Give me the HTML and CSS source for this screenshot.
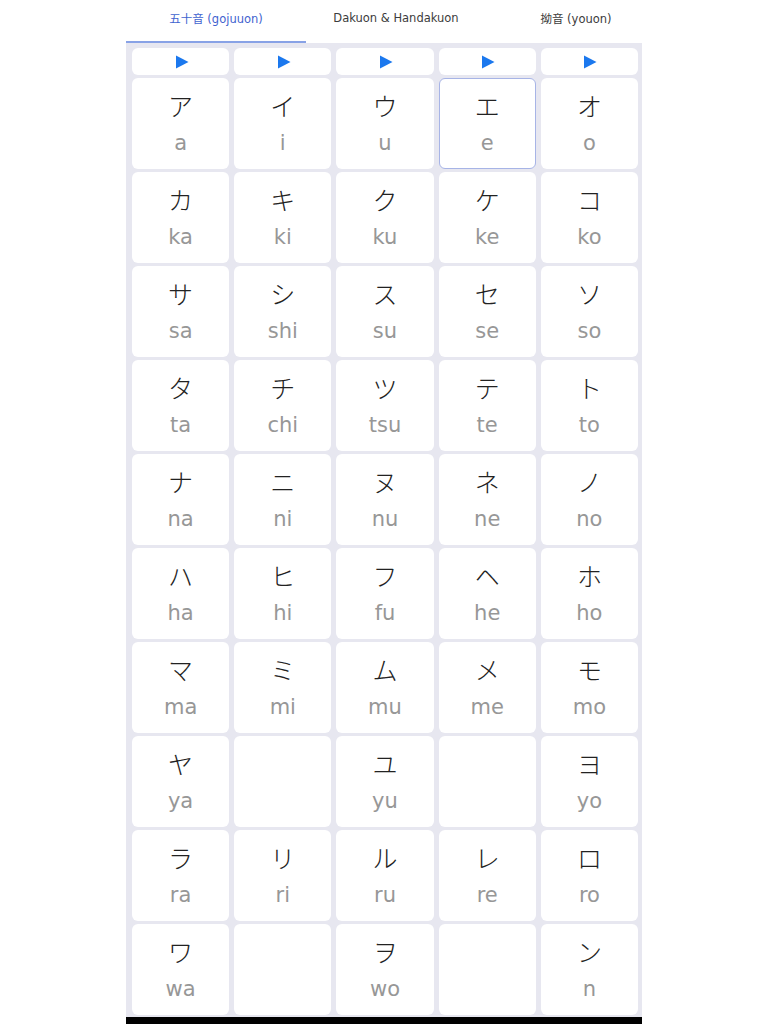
FILE: index.html
```html
<!DOCTYPE html>
<html lang="ja">
<head>
<meta charset="utf-8">
<title>Katakana</title>
<link rel="stylesheet" href="styles.css">
</head>
<body>
<div class="app">
  <nav class="tabs">
    <div class="tab active">五十音 (gojuuon)</div>
    <div class="tab">Dakuon &amp; Handakuon</div>
    <div class="tab">拗音 (youon)</div>
  </nav>
  <main class="grid">
    <button class="play"><svg viewBox="0 0 14 14" width="14" height="14"><path d="M1 0.5 L13.5 7 L1 13.5 Z"/></svg></button>
    <button class="play"><svg viewBox="0 0 14 14" width="14" height="14"><path d="M1 0.5 L13.5 7 L1 13.5 Z"/></svg></button>
    <button class="play"><svg viewBox="0 0 14 14" width="14" height="14"><path d="M1 0.5 L13.5 7 L1 13.5 Z"/></svg></button>
    <button class="play"><svg viewBox="0 0 14 14" width="14" height="14"><path d="M1 0.5 L13.5 7 L1 13.5 Z"/></svg></button>
    <button class="play"><svg viewBox="0 0 14 14" width="14" height="14"><path d="M1 0.5 L13.5 7 L1 13.5 Z"/></svg></button>

    <div class="cell"><span class="kana">ア</span><span class="romaji">a</span></div>
    <div class="cell"><span class="kana">イ</span><span class="romaji">i</span></div>
    <div class="cell"><span class="kana">ウ</span><span class="romaji">u</span></div>
    <div class="cell selected"><span class="kana">エ</span><span class="romaji">e</span></div>
    <div class="cell"><span class="kana">オ</span><span class="romaji">o</span></div>

    <div class="cell"><span class="kana">カ</span><span class="romaji">ka</span></div>
    <div class="cell"><span class="kana">キ</span><span class="romaji">ki</span></div>
    <div class="cell"><span class="kana">ク</span><span class="romaji">ku</span></div>
    <div class="cell"><span class="kana">ケ</span><span class="romaji">ke</span></div>
    <div class="cell"><span class="kana">コ</span><span class="romaji">ko</span></div>

    <div class="cell"><span class="kana">サ</span><span class="romaji">sa</span></div>
    <div class="cell"><span class="kana">シ</span><span class="romaji">shi</span></div>
    <div class="cell"><span class="kana">ス</span><span class="romaji">su</span></div>
    <div class="cell"><span class="kana">セ</span><span class="romaji">se</span></div>
    <div class="cell"><span class="kana">ソ</span><span class="romaji">so</span></div>

    <div class="cell"><span class="kana">タ</span><span class="romaji">ta</span></div>
    <div class="cell"><span class="kana">チ</span><span class="romaji">chi</span></div>
    <div class="cell"><span class="kana">ツ</span><span class="romaji">tsu</span></div>
    <div class="cell"><span class="kana">テ</span><span class="romaji">te</span></div>
    <div class="cell"><span class="kana">ト</span><span class="romaji">to</span></div>

    <div class="cell"><span class="kana">ナ</span><span class="romaji">na</span></div>
    <div class="cell"><span class="kana">ニ</span><span class="romaji">ni</span></div>
    <div class="cell"><span class="kana">ヌ</span><span class="romaji">nu</span></div>
    <div class="cell"><span class="kana">ネ</span><span class="romaji">ne</span></div>
    <div class="cell"><span class="kana">ノ</span><span class="romaji">no</span></div>

    <div class="cell"><span class="kana">ハ</span><span class="romaji">ha</span></div>
    <div class="cell"><span class="kana">ヒ</span><span class="romaji">hi</span></div>
    <div class="cell"><span class="kana">フ</span><span class="romaji">fu</span></div>
    <div class="cell"><span class="kana">ヘ</span><span class="romaji">he</span></div>
    <div class="cell"><span class="kana">ホ</span><span class="romaji">ho</span></div>

    <div class="cell"><span class="kana">マ</span><span class="romaji">ma</span></div>
    <div class="cell"><span class="kana">ミ</span><span class="romaji">mi</span></div>
    <div class="cell"><span class="kana">ム</span><span class="romaji">mu</span></div>
    <div class="cell"><span class="kana">メ</span><span class="romaji">me</span></div>
    <div class="cell"><span class="kana">モ</span><span class="romaji">mo</span></div>

    <div class="cell"><span class="kana">ヤ</span><span class="romaji">ya</span></div>
    <div class="cell empty"></div>
    <div class="cell"><span class="kana">ユ</span><span class="romaji">yu</span></div>
    <div class="cell empty"></div>
    <div class="cell"><span class="kana">ヨ</span><span class="romaji">yo</span></div>

    <div class="cell"><span class="kana">ラ</span><span class="romaji">ra</span></div>
    <div class="cell"><span class="kana">リ</span><span class="romaji">ri</span></div>
    <div class="cell"><span class="kana">ル</span><span class="romaji">ru</span></div>
    <div class="cell"><span class="kana">レ</span><span class="romaji">re</span></div>
    <div class="cell"><span class="kana">ロ</span><span class="romaji">ro</span></div>

    <div class="cell"><span class="kana">ワ</span><span class="romaji">wa</span></div>
    <div class="cell empty"></div>
    <div class="cell"><span class="kana">ヲ</span><span class="romaji">wo</span></div>
    <div class="cell empty"></div>
    <div class="cell"><span class="kana">ン</span><span class="romaji">n</span></div>
  </main>
  <div class="navbar"></div>
</div>
</body>
</html>
```

FILE: styles.css
```css
* { box-sizing: border-box; }

html, body {
  margin: 0;
  padding: 0;
  background: #ffffff;
}

body {
  font-family: "DejaVu Sans", "Noto Sans CJK JP", sans-serif;
}

.app {
  width: 516px;
  margin: 0 auto;
  height: 1024px;
  display: flex;
  flex-direction: column;
}

.tabs {
  height: 43px;
  display: flex;
  overflow: hidden;
  background: #ffffff;
  flex-shrink: 0;
}

.tab {
  flex: 0 0 180px;
  display: flex;
  align-items: center;
  justify-content: center;
  padding-bottom: 5px;
  font-size: 11.5px;
  color: #3c3c3c;
  white-space: nowrap;
  border-bottom: 2px solid transparent;
}

.tab.active {
  color: #3f63cf;
  border-bottom-color: #88a2e6;
}

.grid {
  background: #e7e7f0;
  padding: 5px 4px 2px 6px;
  display: grid;
  grid-template-columns: repeat(5, 1fr);
  grid-template-rows: 27px repeat(10, 91px);
  column-gap: 5px;
  row-gap: 3px;
}

.play {
  border: none;
  margin: 0;
  padding: 0;
  background: #ffffff;
  border-radius: 6px;
  display: flex;
  align-items: center;
  justify-content: center;
}

.play svg {
  fill: #1b78ee;
  margin-left: 2px;
}

.cell {
  background: #ffffff;
  border-radius: 6px;
  border: 1px solid transparent;
  display: flex;
  flex-direction: column;
  align-items: center;
  padding-top: 11px;
}

.cell.selected {
  border-color: #a7b4e6;
}

.kana {
  font-family: "Noto Sans CJK JP", sans-serif;
  font-size: 25px;
  font-weight: 300;
  line-height: 30px;
  color: #222222;
}

.romaji {
  font-family: "DejaVu Sans", sans-serif;
  font-size: 21px;
  font-weight: 400;
  line-height: 30px;
  margin-top: 8px;
  color: #979797;
}

.navbar {
  flex: 1;
  background: #000000;
}
```
